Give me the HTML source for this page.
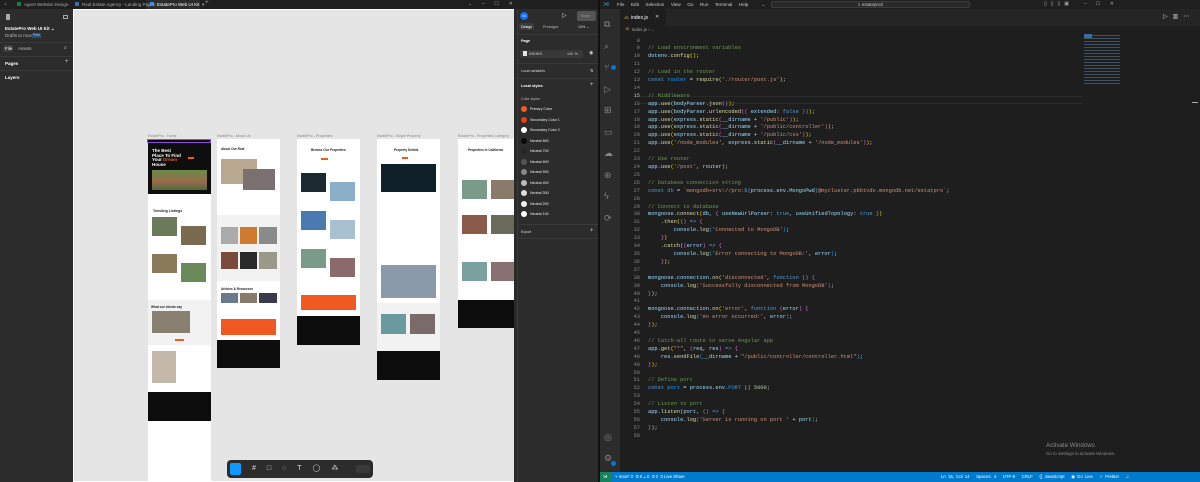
<!DOCTYPE html>
<html><head><meta charset="utf-8"><style>
*{margin:0;padding:0;box-sizing:border-box}
body{width:1200px;height:482px;overflow:hidden;background:#1e1e1e;font-family:"Liberation Sans",sans-serif;position:relative}
.a{position:absolute}
.t{position:absolute;color:#ddd;font-size:4.5px;white-space:nowrap}
.code{position:absolute;left:648px;top:0;font-family:"Liberation Mono",monospace;font-size:5.35px;color:#d4d4d4;white-space:pre}
.ln{position:absolute;left:618px;width:22px;text-align:right;font-family:"Liberation Mono",monospace;font-size:5.35px;color:#858585}
.c{color:#6a9955}.k{color:#569cd6}.s{color:#ce9178}.f{color:#dcdcaa}.v{color:#9cdcfe}.n{color:#b5cea8}.y{color:#ffd700}.p{color:#da70d6}.b{color:#179fff}
.fr{position:absolute;background:#fff}
.blk{position:absolute;background:#111}
.img{position:absolute}
.dot{position:absolute;width:6px;height:6px;border-radius:50%}
</style></head><body>
<!-- FIGMA -->
<div class="a" style="left:0;top:0;width:600px;height:482px;background:#2c2c2c"></div>
<div class="a" style="left:0;top:0;width:600px;height:9px;background:#1f1f1f"></div>
<div class="a" style="left:146px;top:0;width:54px;height:9px;background:#2c2c2c"></div>
<div class="t" style="left:4px;top:1px;color:#ccc">⌂</div>
<div class="a" style="left:17px;top:2px;width:4px;height:4px;background:#1b7f3b"></div>
<div class="t" style="left:24px;top:1.5px;color:#aaa">Agent Website Design</div>
<div class="a" style="left:75px;top:2px;width:4px;height:4px;background:#3a6ea5"></div>
<div class="t" style="left:82px;top:1.5px;color:#aaa">Real Estate Agency - Landing Page I</div>
<div class="a" style="left:150px;top:2px;width:4px;height:4px;background:#3a8ee6"></div>
<div class="t" style="left:157px;top:1.5px;color:#fff">EstatePro Web UI Kit &nbsp;×</div>
<div class="t" style="left:205px;top:0px;color:#aaa;font-size:6px">+</div>
<div class="t" style="left:468px;top:1px;color:#aaa;font-size:5px">⌄ &nbsp;&nbsp;&nbsp;&nbsp;&nbsp; – &nbsp;&nbsp;&nbsp;&nbsp;&nbsp; ☐ &nbsp;&nbsp;&nbsp;&nbsp;&nbsp; ✕</div>
<!-- left panel -->
<div class="a" style="left:6px;top:14px;width:4px;height:6px;background:#aaa"></div>
<div class="a" style="left:63px;top:15px;width:5px;height:4px;border:1px solid #aaa"></div>
<div class="t" style="left:5px;top:26px;color:#fff;font-weight:bold">EstatePro Web UI Kit ⌄</div>
<div class="t" style="left:5px;top:33px;color:#bbb">Drafts to move</div>
<div class="a" style="left:32px;top:33px;width:9px;height:5px;background:#2d4a73"></div>
<div class="t" style="left:33px;top:33px;color:#9cc4ff;font-size:3.5px">Free</div>
<div class="a" style="left:0;top:42px;width:73px;height:1px;background:#3a3a3a"></div>
<div class="a" style="left:3px;top:45px;width:10px;height:7px;background:#3c3c3c;border-radius:2px"></div>
<div class="t" style="left:5px;top:46px;color:#fff">File</div>
<div class="t" style="left:18px;top:46px;color:#bbb">Assets</div>
<div class="t" style="left:64px;top:45px;color:#ccc;font-size:5px">⌕</div>
<div class="a" style="left:0;top:56px;width:73px;height:1px;background:#3a3a3a"></div>
<div class="t" style="left:5px;top:61px;color:#fff;font-weight:bold">Pages</div>
<div class="t" style="left:65px;top:59px;color:#ccc;font-size:6px">+</div>
<div class="a" style="left:0;top:70px;width:73px;height:1px;background:#3a3a3a"></div>
<div class="t" style="left:5px;top:75px;color:#fff;font-weight:bold">Layers</div>
<!-- canvas -->
<div class="a" style="left:73px;top:9px;width:444px;height:473px;background:#e5e5e5;border:1px solid #fff"></div>
<div class="a" style="left:514px;top:9px;width:3px;height:473px;background:#2a2a2a"></div>
<div class="t" style="left:148px;top:134px;color:#888;font-size:3.6px">EstatePro - Home</div>
<div class="t" style="left:217px;top:134px;color:#888;font-size:3.6px">EstatePro - About Us</div>
<div class="t" style="left:297px;top:134px;color:#888;font-size:3.6px">EstatePro - Properties</div>
<div class="t" style="left:377px;top:134px;color:#888;font-size:3.6px">EstatePro - Single Property</div>
<div class="t" style="left:458px;top:134px;color:#888;font-size:3.6px">EstatePro - Properties Category</div>
<!-- home -->
<div class="fr" style="left:148px;top:139px;width:63px;height:343px"></div>
<div class="blk" style="left:148px;top:140px;width:63px;height:54px;background:#0e0e0e"></div>
<div class="a" style="left:147px;top:139px;width:64px;height:4px;border:1px solid #8b4fe0"></div>
<div class="t" style="left:152px;top:149px;color:#fff;font-size:4.5px;font-weight:bold;line-height:4.5px;white-space:normal;width:30px">The Best Place To Find Your <span style="color:#f05a22">Dream</span> House</div>
<div class="img" style="left:152px;top:170px;width:55px;height:20px;background:linear-gradient(#6a8a4a,#9a6a4a 60%,#4a6a3a)"></div>
<div class="a" style="left:188px;top:157px;width:6px;height:2px;background:#f05a22"></div>
<div class="t" style="left:153px;top:209px;color:#222;font-size:3.5px;font-weight:bold">Trending Listings</div>
<div class="img" style="left:152px;top:217px;width:25px;height:19px;background:#6a7a5a"></div>
<div class="img" style="left:181px;top:226px;width:25px;height:19px;background:#7a6a50"></div>
<div class="img" style="left:152px;top:254px;width:25px;height:19px;background:#8a7a5a"></div>
<div class="img" style="left:181px;top:263px;width:25px;height:19px;background:#6a8a5a"></div>
<div class="a" style="left:148px;top:300px;width:63px;height:45px;background:#f2f2f2"></div>
<div class="t" style="left:151px;top:305px;color:#222;font-size:3.2px;font-weight:bold">What our clients say</div>
<div class="img" style="left:152px;top:311px;width:38px;height:22px;background:#8a8070"></div>
<div class="a" style="left:175px;top:339px;width:9px;height:2px;background:#f05a22"></div>
<div class="img" style="left:152px;top:351px;width:24px;height:32px;background:#c4b8a8"></div>
<div class="blk" style="left:148px;top:392px;width:63px;height:29px;background:#0c0c0c"></div>
<!-- about -->
<div class="fr" style="left:217px;top:139px;width:63px;height:229px"></div>
<div class="t" style="left:221px;top:147px;color:#222;font-size:3.2px;font-weight:bold">About Our Real</div>
<div class="img" style="left:221px;top:159px;width:36px;height:25px;background:#b9a890"></div>
<div class="img" style="left:243px;top:169px;width:32px;height:21px;background:#7a7070"></div>
<div class="a" style="left:217px;top:215px;width:63px;height:66px;background:#f2f2f2"></div>
<div class="img" style="left:221px;top:227px;width:17px;height:17px;background:#aaa"></div>
<div class="img" style="left:240px;top:227px;width:17px;height:17px;background:#d07a30"></div>
<div class="img" style="left:259px;top:227px;width:18px;height:17px;background:#8a8a8a"></div>
<div class="img" style="left:221px;top:252px;width:17px;height:17px;background:#7a4a3a"></div>
<div class="img" style="left:240px;top:252px;width:17px;height:17px;background:#2a2a2a"></div>
<div class="img" style="left:259px;top:252px;width:18px;height:17px;background:#9a9a8a"></div>
<div class="t" style="left:221px;top:287px;color:#222;font-size:3.2px;font-weight:bold">Articles &amp; Resources</div>
<div class="img" style="left:221px;top:293px;width:17px;height:10px;background:#6a7a8a"></div>
<div class="img" style="left:240px;top:293px;width:17px;height:10px;background:#8a7a6a"></div>
<div class="img" style="left:259px;top:293px;width:18px;height:10px;background:#3a3a4a"></div>
<div class="a" style="left:221px;top:319px;width:55px;height:16px;background:#f05a22"></div>
<div class="blk" style="left:217px;top:340px;width:63px;height:28px;background:#0c0c0c"></div>
<!-- properties -->
<div class="fr" style="left:297px;top:139px;width:63px;height:206px"></div>
<div class="t" style="left:311px;top:148px;color:#222;font-size:3.2px;font-weight:bold">Browse Our Properties</div>
<div class="a" style="left:321px;top:158px;width:7px;height:2px;background:#f05a22"></div>
<div class="img" style="left:301px;top:173px;width:25px;height:19px;background:#1a2a30"></div>
<div class="img" style="left:330px;top:182px;width:25px;height:19px;background:#8ab0c8"></div>
<div class="img" style="left:301px;top:211px;width:25px;height:19px;background:#4a7ab0"></div>
<div class="img" style="left:330px;top:220px;width:25px;height:19px;background:#a8c0d0"></div>
<div class="img" style="left:301px;top:249px;width:25px;height:19px;background:#7a9a8a"></div>
<div class="img" style="left:330px;top:258px;width:25px;height:19px;background:#8a6a6a"></div>
<div class="a" style="left:301px;top:295px;width:55px;height:15px;background:#f05a22"></div>
<div class="blk" style="left:297px;top:316px;width:63px;height:29px;background:#0c0c0c"></div>
<!-- single -->
<div class="fr" style="left:377px;top:139px;width:63px;height:241px"></div>
<div class="t" style="left:394px;top:148px;color:#222;font-size:3.2px;font-weight:bold">Property Details</div>
<div class="a" style="left:402px;top:157px;width:6px;height:2px;background:#f05a22"></div>
<div class="img" style="left:381px;top:164px;width:55px;height:28px;background:#102028"></div>
<div class="img" style="left:381px;top:265px;width:55px;height:33px;background:#8a9aa8"></div>
<div class="a" style="left:377px;top:303px;width:63px;height:48px;background:#f2f2f2"></div>
<div class="img" style="left:381px;top:314px;width:25px;height:20px;background:#6a9aa0"></div>
<div class="img" style="left:410px;top:314px;width:25px;height:20px;background:#7a6a6a"></div>
<div class="blk" style="left:377px;top:351px;width:63px;height:29px;background:#0c0c0c"></div>
<!-- category -->
<div class="fr" style="left:458px;top:139px;width:56px;height:161px"></div>
<div class="t" style="left:468px;top:148px;color:#222;font-size:3.2px;font-weight:bold">Properties in California</div>
<div class="img" style="left:462px;top:180px;width:25px;height:19px;background:#7a9a8a"></div>
<div class="img" style="left:491px;top:180px;width:23px;height:19px;background:#8a7a6a"></div>
<div class="img" style="left:462px;top:215px;width:25px;height:19px;background:#8a5a4a"></div>
<div class="img" style="left:491px;top:215px;width:23px;height:19px;background:#6a6a5a"></div>
<div class="img" style="left:462px;top:262px;width:25px;height:19px;background:#7aa0a0"></div>
<div class="img" style="left:491px;top:262px;width:23px;height:19px;background:#8a7070"></div>
<div class="blk" style="left:458px;top:300px;width:56px;height:28px;background:#0c0c0c"></div>
<!-- toolbar -->
<div class="a" style="left:227px;top:460px;width:146px;height:18px;background:#2c2c2c;border-radius:4px"></div>
<div class="a" style="left:230px;top:463px;width:11px;height:12px;background:#0d99ff;border-radius:2px"></div>
<div class="t" style="left:252px;top:464px;color:#ddd;font-size:7px;letter-spacing:11px">#□◌T◯⁂</div>
<div class="a" style="left:356px;top:465px;width:14px;height:8px;background:#3a3a3a;border-radius:2px"></div>
<div class="a" style="left:579px;top:462px;width:12px;height:12px;background:#1e1e1e;border-radius:50%"></div>
<div class="t" style="left:583px;top:465px;color:#ccc">?</div>
<!-- right panel -->
<div class="a" style="left:517px;top:9px;width:81px;height:473px;background:#2c2c2c;border-left:1px solid #3a3a3a"></div>
<div class="a" style="left:520px;top:12px;width:8px;height:8px;background:#0d6efd;border-radius:50%"></div>
<div class="t" style="left:522.5px;top:13px;color:#fff;font-size:4px">M</div>
<div class="t" style="left:562px;top:12px;color:#ddd;font-size:6px">▷</div>
<div class="a" style="left:577px;top:11px;width:19px;height:10px;background:#555;border-radius:2px"></div>
<div class="t" style="left:581px;top:14px;color:#999;font-size:3.5px">Share</div>
<div class="a" style="left:519px;top:23px;width:15px;height:7px;background:#3c3c3c;border-radius:2px"></div>
<div class="t" style="left:521px;top:24.5px;color:#fff;font-size:3.6px">Design</div>
<div class="t" style="left:543px;top:24.5px;color:#bbb;font-size:3.6px">Prototype</div>
<div class="t" style="left:578px;top:24.5px;color:#ddd;font-size:3.6px">13% ⌄</div>
<div class="a" style="left:517px;top:34px;width:81px;height:1px;background:#3a3a3a"></div>
<div class="t" style="left:521px;top:39px;color:#fff;font-size:3.8px;font-weight:bold">Page</div>
<div class="a" style="left:520px;top:50px;width:63px;height:8px;background:#383838;border-radius:2px"></div>
<div class="a" style="left:523px;top:51px;width:4px;height:5px;background:#e5e5e5"></div>
<div class="t" style="left:529px;top:52px;color:#ccc;font-size:3.5px">E5E5E5</div>
<div class="t" style="left:567px;top:52px;color:#ccc;font-size:3.5px">100 &nbsp;%</div>
<div class="t" style="left:589px;top:50px;color:#ccc;font-size:5px">◉</div>
<div class="a" style="left:517px;top:63px;width:81px;height:1px;background:#3a3a3a"></div>
<div class="t" style="left:521px;top:69px;color:#ddd;font-size:3.6px">Local variables</div>
<div class="t" style="left:590px;top:68px;color:#ccc;font-size:4px">⇅</div>
<div class="a" style="left:517px;top:78px;width:81px;height:1px;background:#3a3a3a"></div>
<div class="t" style="left:521px;top:84px;color:#fff;font-size:3.8px;font-weight:bold">Local styles</div>
<div class="t" style="left:590px;top:82px;color:#ccc;font-size:6px">+</div>
<div class="t" style="left:521px;top:97px;color:#bbb;font-size:3.6px">Color styles</div>
<div class="dot" style="left:521px;top:106px;background:#f05a22"></div><div class="t" style="left:530px;top:107px;color:#eee;font-size:3.6px">Primary Color</div>
<div class="dot" style="left:521px;top:117px;background:#e8410e"></div><div class="t" style="left:530px;top:118px;color:#eee;font-size:3.6px">Secondary Color 1</div>
<div class="dot" style="left:521px;top:127px;background:#fff"></div><div class="t" style="left:530px;top:128px;color:#eee;font-size:3.6px">Secondary Color 2</div>
<div class="dot" style="left:521px;top:138px;background:#0a0a0a"></div><div class="t" style="left:530px;top:139px;color:#eee;font-size:3.6px">Neutral 800</div>
<div class="dot" style="left:521px;top:148px;background:#262626"></div><div class="t" style="left:530px;top:149px;color:#eee;font-size:3.6px">Neutral 700</div>
<div class="dot" style="left:521px;top:159px;background:#555"></div><div class="t" style="left:530px;top:160px;color:#eee;font-size:3.6px">Neutral 600</div>
<div class="dot" style="left:521px;top:169px;background:#888"></div><div class="t" style="left:530px;top:170px;color:#eee;font-size:3.6px">Neutral 500</div>
<div class="dot" style="left:521px;top:180px;background:#bbb"></div><div class="t" style="left:530px;top:181px;color:#eee;font-size:3.6px">Neutral 400</div>
<div class="dot" style="left:521px;top:190px;background:#ddd"></div><div class="t" style="left:530px;top:191px;color:#eee;font-size:3.6px">Neutral 300</div>
<div class="dot" style="left:521px;top:201px;background:#f0f0f0"></div><div class="t" style="left:530px;top:202px;color:#eee;font-size:3.6px">Neutral 200</div>
<div class="dot" style="left:521px;top:211px;background:#fff"></div><div class="t" style="left:530px;top:212px;color:#eee;font-size:3.6px">Neutral 100</div>
<div class="a" style="left:517px;top:224px;width:81px;height:1px;background:#3a3a3a"></div>
<div class="t" style="left:521px;top:230px;color:#ddd;font-size:3.6px">Export</div>
<div class="t" style="left:590px;top:228px;color:#ccc;font-size:6px">+</div>
<div class="a" style="left:517px;top:238px;width:81px;height:1px;background:#3a3a3a"></div>
<!-- separator -->
<div class="a" style="left:598px;top:0;width:2px;height:482px;background:#111"></div>

<!-- VS CODE -->
<div class="a" style="left:600px;top:0;width:600px;height:9px;background:#1f1f1f"></div>
<div class="t" style="left:603px;top:1px;color:#3c99d4;font-size:6px">⋊</div>
<div class="t" style="left:617px;top:1.5px;color:#ccc;font-size:4.6px;word-spacing:2px">File &nbsp;Edit &nbsp;Selection &nbsp;View &nbsp;Go &nbsp;Run &nbsp;Terminal &nbsp;Help &nbsp;&nbsp;&nbsp;← &nbsp;→</div>
<div class="a" style="left:771px;top:1px;width:199px;height:7px;background:#2a2a2a;border:1px solid #3c3c3c;border-radius:2px"></div>
<div class="t" style="left:858px;top:1.5px;color:#ccc;font-size:4.5px">⌕ estatepro2</div>
<div class="t" style="left:1044px;top:1px;color:#aaa;font-size:5px;letter-spacing:4px">▯▯▯▣ &nbsp;– ☐ ✕</div>
<!-- activity bar -->
<div class="a" style="left:600px;top:9px;width:20px;height:463px;background:#2c2c2c"></div>
<div class="t" style="left:604px;top:14px;color:#858585;font-size:9px;line-height:21.5px;white-space:pre">⧉
⌕
⑂
▷
⊞
▭
☁
⊛
ϟ
⟳</div>
<div class="a" style="left:611px;top:65px;width:5px;height:5px;background:#0078d4;border-radius:50%"></div>
<div class="t" style="left:604px;top:432px;color:#858585;font-size:9px">◎</div>
<div class="t" style="left:604px;top:453px;color:#858585;font-size:9px">⚙</div>
<div class="a" style="left:611px;top:461px;width:5px;height:5px;background:#0078d4;border-radius:50%"></div>
<!-- tabs -->
<div class="a" style="left:620px;top:9px;width:580px;height:17px;background:#252526"></div>
<div class="a" style="left:620px;top:9px;width:46px;height:17px;background:#1e1e1e"></div>
<div class="t" style="left:624px;top:15px;color:#cbcb41;font-size:4px">JS</div>
<div class="t" style="left:631px;top:14.5px;color:#fff;font-size:5px">index.js</div>
<div class="t" style="left:655px;top:14px;color:#ccc;font-size:5px">✕</div>
<div class="t" style="left:1163px;top:13px;color:#ccc;font-size:6px;letter-spacing:5px">▷▥⋯</div>
<div class="a" style="left:620px;top:26px;width:580px;height:446px;background:#1e1e1e"></div>
<div class="t" style="left:625px;top:27px;color:#cbcb41;font-size:3.5px">JS</div>
<div class="t" style="left:632px;top:27px;color:#aaa;font-size:4.4px">index.js › ...</div>
<div class="a" style="left:640px;top:96px;width:442px;height:8px;border-top:1px solid #2b2b2b;border-bottom:1px solid #2b2b2b"></div>
<!-- line numbers and code -->
<div class="ln" style="top:37.5px;line-height:7.9px;white-space:pre">8
9
10
11
12
13
14
<span style="color:#c6c6c6">15</span>
16
17
18
19
20
21
22
23
24
25
26
27
28
29
30
31
32
33
34
35
36
37
38
39
40
41
42
43
44
45
46
47
48
49
50
51
52
53
54
55
56
57
58</div>
<div class="code" style="top:37.5px;line-height:7.9px">
<span class="c">// Load environment variables</span>
<span class="v">dotenv</span>.<span class="f">config</span><span class="y">()</span>;

<span class="c">// Load in the router</span>
<span class="k">const</span> <span class="b">router</span> = <span class="f">require</span><span class="y">(</span><span class="s">'./router/post.js'</span><span class="y">)</span>;

<span class="c">// Middleware</span>
<span class="v">app</span>.<span class="f">use</span><span class="y">(</span><span class="v">bodyParser</span>.<span class="f">json</span><span class="p">()</span><span class="y">)</span>;
<span class="v">app</span>.<span class="f">use</span><span class="y">(</span><span class="v">bodyParser</span>.<span class="f">urlencoded</span><span class="p">(</span><span class="b">{</span> <span class="v">extended</span>: <span class="k">false</span> <span class="b">}</span><span class="p">)</span><span class="y">)</span>;
<span class="v">app</span>.<span class="f">use</span><span class="y">(</span><span class="v">express</span>.<span class="f">static</span><span class="p">(</span><span class="v">__dirname</span> + <span class="s">'/public'</span><span class="p">)</span><span class="y">)</span>;
<span class="v">app</span>.<span class="f">use</span><span class="y">(</span><span class="v">express</span>.<span class="f">static</span><span class="p">(</span><span class="v">__dirname</span> + <span class="s">'/public/controller'</span><span class="p">)</span><span class="y">)</span>;
<span class="v">app</span>.<span class="f">use</span><span class="y">(</span><span class="v">express</span>.<span class="f">static</span><span class="p">(</span><span class="v">__dirname</span> + <span class="s">'/public/css'</span><span class="p">)</span><span class="y">)</span>;
<span class="v">app</span>.<span class="f">use</span><span class="y">(</span><span class="s">'/node_modules'</span>, <span class="v">express</span>.<span class="f">static</span><span class="p">(</span><span class="v">__dirname</span> + <span class="s">'/node_modules'</span><span class="p">)</span><span class="y">)</span>;

<span class="c">// Use router</span>
<span class="v">app</span>.<span class="f">use</span><span class="y">(</span><span class="s">'/post'</span>, <span class="v">router</span><span class="y">)</span>;

<span class="c">// Database connection string</span>
<span class="k">const</span> <span class="b">db</span> = <span class="s">`mongodb+srv://pro:</span><span class="k">${</span><span class="v">process</span>.<span class="v">env</span>.<span class="v">MongoPwd</span><span class="k">}</span><span class="s">@mycluster.pbbtvdv.mongodb.net/estatpro`</span>;

<span class="c">// Connect to database</span>
<span class="v">mongoose</span>.<span class="f">connect</span><span class="y">(</span><span class="v">db</span>, <span class="p">{</span> <span class="v">useNewUrlParser</span>: <span class="k">true</span>, <span class="v">useUnifiedTopology</span>: <span class="k">true</span> <span class="p">}</span><span class="y">)</span>
    .<span class="f">then</span><span class="y">(</span><span class="p">()</span> <span class="k">=&gt;</span> <span class="p">{</span>
        <span class="v">console</span>.<span class="f">log</span><span class="b">(</span><span class="s">'Connected to MongoDB'</span><span class="b">)</span>;
    <span class="p">}</span><span class="y">)</span>
    .<span class="f">catch</span><span class="y">(</span><span class="p">(</span><span class="v">error</span><span class="p">)</span> <span class="k">=&gt;</span> <span class="p">{</span>
        <span class="v">console</span>.<span class="f">log</span><span class="b">(</span><span class="s">'Error connecting to MongoDB:'</span>, <span class="v">error</span><span class="b">)</span>;
    <span class="p">}</span><span class="y">)</span>;

<span class="v">mongoose</span>.<span class="v">connection</span>.<span class="f">on</span><span class="y">(</span><span class="s">'disconnected'</span>, <span class="k">function</span> <span class="p">()</span> <span class="p">{</span>
    <span class="v">console</span>.<span class="f">log</span><span class="b">(</span><span class="s">'Successfully disconnected from MongoDB'</span><span class="b">)</span>;
<span class="p">}</span><span class="y">)</span>;

<span class="v">mongoose</span>.<span class="v">connection</span>.<span class="f">on</span><span class="y">(</span><span class="s">'error'</span>, <span class="k">function</span> <span class="p">(</span><span class="v">error</span><span class="p">)</span> <span class="p">{</span>
    <span class="v">console</span>.<span class="f">log</span><span class="b">(</span><span class="s">'An error occurred:'</span>, <span class="v">error</span><span class="b">)</span>;
<span class="p">}</span><span class="y">)</span>;

<span class="c">// Catch-all route to serve Angular app</span>
<span class="v">app</span>.<span class="f">get</span><span class="y">(</span><span class="s">"*"</span>, <span class="p">(</span><span class="v">req</span>, <span class="v">res</span><span class="p">)</span> <span class="k">=&gt;</span> <span class="p">{</span>
    <span class="v">res</span>.<span class="f">sendFile</span><span class="b">(</span><span class="v">__dirname</span> + <span class="s">"/public/controller/controller.html"</span><span class="b">)</span>;
<span class="p">}</span><span class="y">)</span>;

<span class="c">// Define port</span>
<span class="k">const</span> <span class="b">port</span> = <span class="v">process</span>.<span class="v">env</span>.<span class="b">PORT</span> || <span class="n">5000</span>;

<span class="c">// Listen to port</span>
<span class="v">app</span>.<span class="f">listen</span><span class="y">(</span><span class="v">port</span>, <span class="p">()</span> <span class="k">=&gt;</span> <span class="p">{</span>
    <span class="v">console</span>.<span class="f">log</span><span class="b">(</span><span class="s">'Server is running on port '</span> + <span class="v">port</span><span class="b">)</span>;
<span class="p">}</span><span class="y">)</span>;
</div>
<!-- minimap -->
<div class="a" style="left:1084px;top:34px;width:36px;height:50px;opacity:.55;background:repeating-linear-gradient(#1e1e1e 0 1px,#5a7a9a 1px 2px,#1e1e1e 2px 3px)"></div>
<div class="a" style="left:1084px;top:34px;width:8px;height:4px;background:#3a6aa0"></div>
<div class="a" style="left:1192px;top:102px;width:6px;height:1px;background:#aaa"></div>
<div class="t" style="left:1046px;top:442px;color:#8a8a8a;font-size:6.2px">Activate Windows</div>
<div class="t" style="left:1046px;top:451px;color:#8a8a8a;font-size:4.4px">Go to Settings to activate Windows.</div>
<!-- status bar -->
<div class="a" style="left:600px;top:472px;width:600px;height:10px;background:#007acc"></div>
<div class="a" style="left:600px;top:472px;width:12px;height:10px;background:#16825d"></div>
<div class="t" style="left:603px;top:474px;color:#fff;font-size:4.3px">⋊</div>
<div class="t" style="left:615px;top:474px;color:#fff;font-size:4.3px">⑂ main* ⟳ &nbsp;⊗ 0 ⚠ 0 &nbsp;⊘ 0 &nbsp;⚇ Live Share</div>
<div class="t" style="left:941px;top:474px;color:#fff;font-size:4.3px;word-spacing:1px">Ln 15, Col 14 &nbsp;&nbsp;Spaces: 4 &nbsp;&nbsp;UTF-8 &nbsp;&nbsp;CRLF &nbsp;&nbsp;{} JavaScript &nbsp;&nbsp;◉ Go Live &nbsp;&nbsp;✓ Prettier &nbsp;&nbsp;♫</div>
</body></html>
